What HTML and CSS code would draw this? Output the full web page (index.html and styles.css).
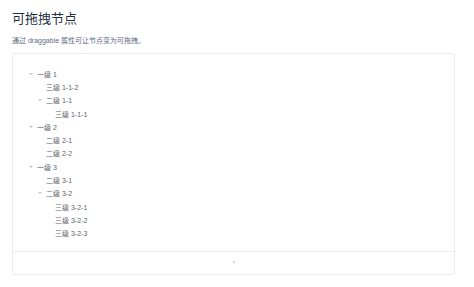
FILE: index.html
```html
<!DOCTYPE html>
<html lang="zh">
<head>
  <meta charset="UTF-8" />
  <title>可拖拽节点</title>
  <link rel="stylesheet" href="styles.css">
</head>
<body>
  <h3 class="title">可拖拽节点</h3>
  <p class="desc">通过 draggable 属性可让节点变为可拖拽。</p>

  <div class="demo-block">
    <div class="source">
      <div class="tree">
        <div class="node lv1"><span class="caret open"></span>一级 1</div>
        <div class="node lv2"><span class="caret leaf"></span>三级 1-1-2</div>
        <div class="node lv2"><span class="caret open"></span>二级 1-1</div>
        <div class="node lv3"><span class="caret leaf"></span>三级 1-1-1</div>
        <div class="node lv1"><span class="caret open"></span>一级 2</div>
        <div class="node lv2"><span class="caret leaf"></span>二级 2-1</div>
        <div class="node lv2"><span class="caret leaf"></span>二级 2-2</div>
        <div class="node lv1"><span class="caret open"></span>一级 3</div>
        <div class="node lv2"><span class="caret leaf"></span>二级 3-1</div>
        <div class="node lv2"><span class="caret open"></span>二级 3-2</div>
        <div class="node lv3"><span class="caret leaf"></span>三级 3-2-1</div>
        <div class="node lv3"><span class="caret leaf"></span>三级 3-2-2</div>
        <div class="node lv3"><span class="caret leaf"></span>三级 3-2-3</div>
      </div>
    </div>
    <div class="control"><span class="down"></span></div>
  </div>
</body>
</html>
```

FILE: styles.css
```css
body { margin: 0; padding: 12px 19px 0 12px; font-family: "Liberation Sans", "Noto Sans CJK SC", sans-serif; background: #fff; }
.title { margin: 0; font-size: 13px; font-weight: 400; color: #1f2f3d; line-height: 14px; }
.desc { margin: 10px 0 7px; font-size: 7px; line-height: 10px; color: #5e6d82; }

.demo-block { border: 1px solid #ebebeb; border-radius: 2px; }
.source { padding: 13px 12px 11px; }

.tree { color: #606266; font-size: 7px; }
.node { height: 13.3px; display: flex; align-items: center; }
.lv2 { padding-left: 9px; }
.lv3 { padding-left: 18px; }

.caret { width: 6px; height: 6px; padding: 3px; box-sizing: content-box; display: flex; align-items: center; justify-content: center; }
.caret.open::before { content: ""; border-left: 2px solid transparent; border-right: 2px solid transparent; border-top: 2.5px solid #c0c4cc; }

.control { height: 22px; border-top: 1px solid #eaeefb; display: flex; align-items: center; justify-content: center; }
.down { border-left: 2.5px solid transparent; border-right: 2.5px solid transparent; border-top: 3px solid #d3dce6; }
```
